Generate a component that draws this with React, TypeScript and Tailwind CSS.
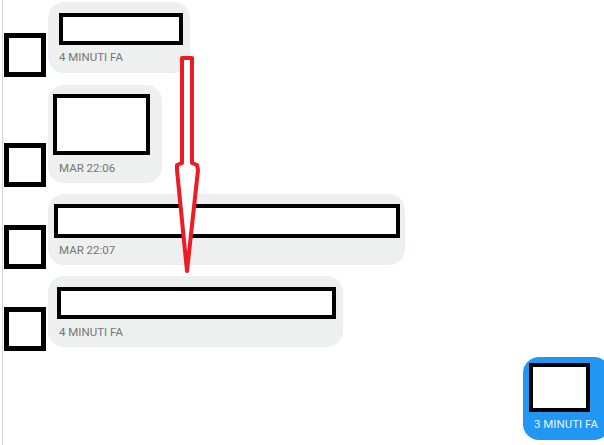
import React from "react";

type Msg = {
  time: string;
  w: number;
  h: number;
  box: { ml: string; mt: string; w: string; h: string };
  textMt: string;
};

const msgs: Msg[] = [
  { time: "4 MINUTI FA", w: 142, h: 71, box: { ml: "ml-[11px]", mt: "mt-[11px]", w: "w-[124px]", h: "h-[32px]" }, textMt: "mt-[5px]" },
  { time: "MAR 22:06", w: 114, h: 98, box: { ml: "ml-[5px]", mt: "mt-[9px]", w: "w-[97px]", h: "h-[61px]" }, textMt: "mt-[6px]" },
  { time: "MAR 22:07", w: 357, h: 71, box: { ml: "ml-[6px]", mt: "mt-[10px]", w: "w-[346px]", h: "h-[34px]" }, textMt: "mt-[5px]" },
  { time: "4 MINUTI FA", w: 295, h: 71, box: { ml: "ml-[9px]", mt: "mt-[11px]", w: "w-[279px]", h: "h-[32px]" }, textMt: "mt-[6px]" },
];

const rowGap = ["mt-[2px]", "mt-[8px]", "mt-[7px]", "mt-[7px]"];

function Avatar() {
  return (
    <div className="w-[48px] shrink-0 pl-[4px]">
      <div className="h-[44px] w-[42px] border-[5px] border-black bg-white" />
    </div>
  );
}

function Bubble({ m }: { m: Msg }) {
  return (
    <div
      className="mb-[4px] flex flex-col rounded-[16px] bg-[#eef0f0]"
      style={{ width: m.w, height: m.h }}
    >
      <div className={`${m.box.ml} ${m.box.mt} ${m.box.w} ${m.box.h} border-[4px] border-black bg-white`} />
      <div className={`${m.textMt} pl-[11px] text-[11.5px] leading-[14px] text-[#757575]`}>{m.time}</div>
    </div>
  );
}

export default function App() {
  return (
    <div
      className="relative h-[445px] w-[604px] overflow-hidden bg-white"
      style={{ fontFamily: "Roboto, 'Liberation Sans', sans-serif" }}
    >
      <div className="absolute left-[2px] top-0 h-full w-px bg-[#d6d6d6]" />
      <div className="flex flex-col">
        {msgs.map((m, i) => (
          <div key={i} className={`${rowGap[i]} flex items-end`}>
            <Avatar />
            <Bubble m={m} />
          </div>
        ))}
        <div className="mt-[6px] flex justify-end">
          <div className="-mr-[6px] flex h-[83px] w-[87px] flex-col rounded-[16px] bg-[#2196f3]">
            <div className="ml-[6px] mt-[6px] h-[49px] w-[61px] border-[4px] border-black bg-white" />
            <div className="mt-[5px] pl-[11px] text-[11.5px] leading-[14px] text-[#e8f3fd]">3 MINUTI FA</div>
          </div>
        </div>
      </div>

      {/* red arrow drawn over the chat */}
      <svg className="pointer-events-none absolute left-0 top-0" width="604" height="445">
        <polygon
          points="182,58 192,58 192,163 197,165 198,170 187,271 177,170 177,165 182,163"
          fill="white"
          stroke="#ed1c24"
          strokeWidth="4"
          strokeLinejoin="round"
        />
      </svg>
    </div>
  );
}
